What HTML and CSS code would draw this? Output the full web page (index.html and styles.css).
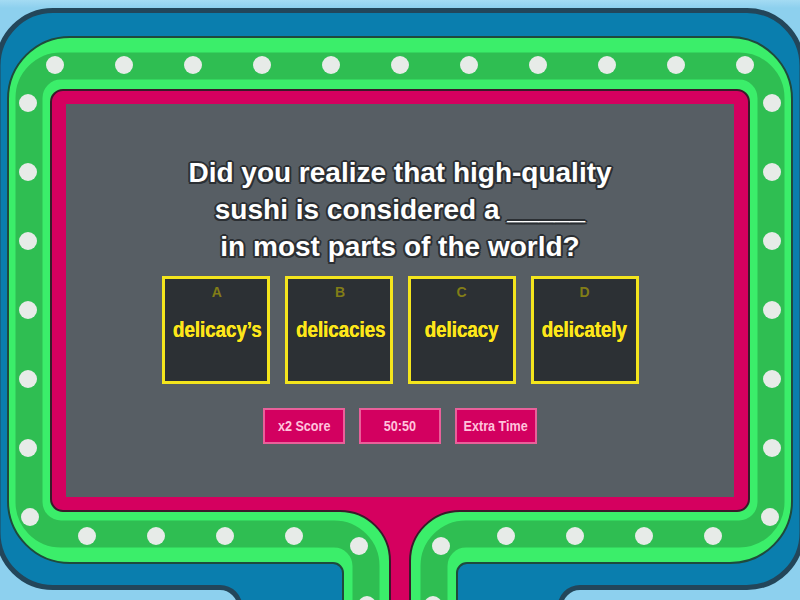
FILE: index.html
```html
<!DOCTYPE html>
<html lang="en">
<head>
<meta charset="utf-8">
<title>Quiz</title>
<link rel="stylesheet" href="styles.css">
</head>
<body>
<div class="stage">
  <svg class="frame" viewBox="0 0 800 600" width="800" height="600" aria-hidden="true">
    <path class="blue" d="M -2 65.5 A 55 55 0 0 1 53 10.5 H 747 A 55 55 0 0 1 802 65.5 V 532.5 A 55 55 0 0 1 747 587.5 H 580 A 20 20 0 0 0 560 607.5 V 630 H 240 V 607.5 A 20 20 0 0 0 220 587.5 H 53 A 55 55 0 0 1 -2 532.5 Z"/>
    <path class="green" d="M 8 99 A 62 62 0 0 1 70 37 H 730 A 62 62 0 0 1 792 99 V 501 A 62 62 0 0 1 730 563 H 467 A 10 10 0 0 0 457 573 V 630 H 343 V 573 A 10 10 0 0 0 333 563 H 70 A 62 62 0 0 1 8 501 Z"/>
    <path class="band" d="M 366 630 V 566 A 32 32 0 0 0 334 534 H 61 A 32 32 0 0 1 29 502 V 98 A 32 32 0 0 1 61 66 H 739 A 32 32 0 0 1 771 98 V 502 A 32 32 0 0 1 739 534 H 466 A 32 32 0 0 0 434 566 V 630"/>
    <g class="dots">
      <circle cx="55" cy="65" r="9"/><circle cx="124" cy="65" r="9"/><circle cx="193" cy="65" r="9"/><circle cx="262" cy="65" r="9"/><circle cx="331" cy="65" r="9"/><circle cx="400" cy="65" r="9"/><circle cx="469" cy="65" r="9"/><circle cx="538" cy="65" r="9"/><circle cx="607" cy="65" r="9"/><circle cx="676" cy="65" r="9"/><circle cx="745" cy="65" r="9"/>
      <circle cx="28" cy="103" r="9"/><circle cx="28" cy="172" r="9"/><circle cx="28" cy="241" r="9"/><circle cx="28" cy="310" r="9"/><circle cx="28" cy="379" r="9"/><circle cx="28" cy="448" r="9"/><circle cx="30" cy="517" r="9"/>
      <circle cx="772" cy="103" r="9"/><circle cx="772" cy="172" r="9"/><circle cx="772" cy="241" r="9"/><circle cx="772" cy="310" r="9"/><circle cx="772" cy="379" r="9"/><circle cx="772" cy="448" r="9"/><circle cx="770" cy="517" r="9"/>
      <circle cx="87" cy="536" r="9"/><circle cx="156" cy="536" r="9"/><circle cx="225" cy="536" r="9"/><circle cx="294" cy="536" r="9"/><circle cx="359" cy="546" r="9"/><circle cx="367" cy="605" r="9"/>
      <circle cx="713" cy="536" r="9"/><circle cx="644" cy="536" r="9"/><circle cx="575" cy="536" r="9"/><circle cx="506" cy="536" r="9"/><circle cx="441" cy="546" r="9"/><circle cx="433" cy="605" r="9"/>
    </g>
    <path class="pink" d="M 51 102 A 12 12 0 0 1 63 90 H 737 A 12 12 0 0 1 749 102 V 499 A 12 12 0 0 1 737 511 H 460 A 50 50 0 0 0 410 561 V 630 H 390 V 561 A 50 50 0 0 0 340 511 H 63 A 12 12 0 0 1 51 499 Z"/>
  </svg>

  <main class="screen">
    <h1 class="question">Did you realize that high-quality<br>sushi is considered a _____<br>in most parts of the world?</h1>
    <div class="answers">
      <div class="card"><span class="card-label">A</span><span class="card-text">delicacy’s</span></div>
      <div class="card"><span class="card-label">B</span><span class="card-text">delicacies</span></div>
      <div class="card"><span class="card-label">C</span><span class="card-text">delicacy</span></div>
      <div class="card"><span class="card-label">D</span><span class="card-text">delicately</span></div>
    </div>
    <div class="powerups">
      <button class="powerup" type="button"><span class="powerup-text">x2 Score</span></button>
      <button class="powerup" type="button"><span class="powerup-text">50:50</span></button>
      <button class="powerup" type="button"><span class="powerup-text">Extra Time</span></button>
    </div>
  </main>
</div>
</body>
</html>
```

FILE: styles.css
```css
* { box-sizing: border-box; }

html, body {
  margin: 0;
  padding: 0;
  width: 800px;
  height: 600px;
  overflow: hidden;
  background: #8dd0ee;
  font-family: "Liberation Sans", Arial, sans-serif;
}

.stage {
  position: relative;
  width: 800px;
  height: 600px;
  overflow: hidden;
  padding: 104px 66px 0 66px;
  background: linear-gradient(#a4dbf3 0, #8dd0ee 8px, #8dd0ee 100%);
}

.frame {
  position: absolute;
  left: 0;
  top: 0;
  display: block;
}

.frame .blue {
  fill: #0a7eae;
  stroke: #23465a;
  stroke-width: 5;
}

.frame .green {
  fill: #3bee6a;
  stroke: #1f4a3c;
  stroke-width: 2;
}

.frame .band {
  fill: none;
  stroke: #2fbe52;
  stroke-width: 27;
}

.frame .dots circle {
  fill: #e7ebe8;
}

.frame .pink {
  fill: #d5005f;
  stroke: #3a1a2a;
  stroke-width: 2;
}

.screen {
  position: relative;
  width: 668px;
  height: 393px;
  background: #575e64;
  display: flex;
  flex-direction: column;
  align-items: center;
  padding-top: 50px;
}

.question {
  margin: 0;
  font-family: "Liberation Sans", Arial, sans-serif;
  font-weight: 700;
  font-size: 28px;
  line-height: 37px;
  text-align: center;
  color: #ffffff;
  text-shadow:
    2px 0 0 #2b2f33, -2px 0 0 #2b2f33, 0 2px 0 #2b2f33, 0 -2px 0 #2b2f33,
    1.5px 1.5px 0 #2b2f33, -1.5px 1.5px 0 #2b2f33, 1.5px -1.5px 0 #2b2f33, -1.5px -1.5px 0 #2b2f33;
}

.answers {
  display: flex;
  gap: 15px;
  margin-top: 11px;
}

.card {
  width: 108px;
  height: 108px;
  border: 3px solid #f4e51d;
  background: #2c3034;
  display: grid;
  justify-items: center;
}

.card-label,
.card-text {
  grid-area: 1 / 1;
  font-weight: 700;
}

.card-label {
  align-self: start;
  margin-top: 5px;
  font-size: 14px;
  line-height: 16px;
  color: #827d17;
}

.card-text {
  align-self: center;
  font-size: 22px;
  line-height: 26px;
  color: #fde61b;
  white-space: nowrap;
  transform: scaleX(0.85);
  text-shadow: 0.5px 0 0 #fde61b, 0 0 1px #1a1c10;
}

.powerups {
  display: flex;
  gap: 14px;
  margin-top: 24px;
}

.powerup {
  width: 82px;
  height: 36px;
  padding: 0;
  margin: 0;
  border: 2px solid #e9609a;
  background: #d30060;
  color: #ffc3dc;
  font-family: "Liberation Sans", Arial, sans-serif;
  font-weight: 700;
  font-size: 14px;
  white-space: nowrap;
  display: flex;
  align-items: center;
  justify-content: center;
}

.powerup-text {
  display: inline-block;
  transform: scaleX(0.9);
}
```
